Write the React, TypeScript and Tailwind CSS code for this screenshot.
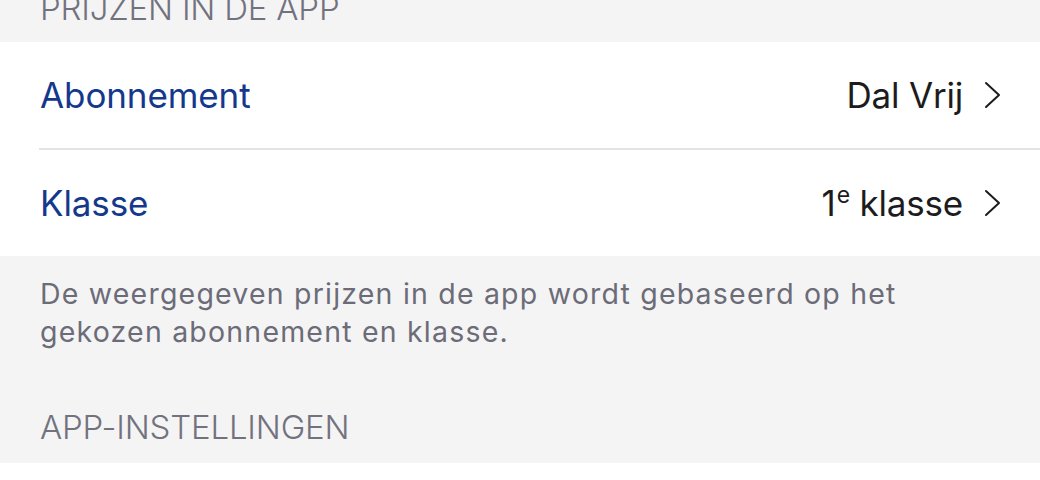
const font = { fontFamily: "Inter, 'Noto Sans', sans-serif" };

interface SettingRowProps {
  label: string;
  children: React.ReactNode;
}

const Chevron = () => (
  <svg width="17" height="28" viewBox="0 0 17 28" fill="none" className="shrink-0">
    <polyline
      points="2,2 15,14 2,26"
      stroke="#1c1c1e"
      strokeWidth="2"
      strokeLinecap="round"
      strokeLinejoin="round"
    />
  </svg>
);

const SettingRow = ({ label, children }: SettingRowProps) => {
  return (
    <div className="flex h-[106px] items-center justify-between pl-[40px] pr-[39px]">
      <span className="text-[35px] text-[#14388c] tracking-[-0.1px]">{label}</span>
      <div className="flex items-center gap-[21px]">
        <span className="text-[35px] text-[#1c1c1e] tracking-[-0.2px]">{children}</span>
        <Chevron />
      </div>
    </div>
  );
};

export default function App() {
  return (
    <div className="h-[480px] w-[1040px] overflow-hidden bg-[#f4f4f4]" style={font}>
      <div className="flex h-[42px] items-end px-[40px] pb-[17px]">
        <h2 className="text-[33px] font-light leading-none text-[#72727e] tracking-[-0.2px]">
          PRIJZEN IN DE APP
        </h2>
      </div>

      <div className="bg-white">
        <SettingRow label="Abonnement">Dal Vrij</SettingRow>
        <div className="ml-[39px] h-[2px] bg-[#e3e3e5]" />
        <SettingRow label="Klasse">
          1<sup className="relative -top-[13px] ml-[1px] text-[23px]">e</sup> klasse
        </SettingRow>
      </div>

      <p className="px-[40px] pt-[19px] text-[28.5px] leading-[38px] text-[#6c6c78] tracking-[1.2px]">
        De weergegeven prijzen in de app wordt gebaseerd op het
        <br />
        gekozen abonnement en klasse.
      </p>

      <div className="flex h-[112px] items-end px-[40px] pb-[19px]">
        <h2 className="text-[33px] font-light leading-none text-[#72727e] tracking-[-0.2px]">
          APP-INSTELLINGEN
        </h2>
      </div>

      <div className="h-[40px] bg-white" />
    </div>
  );
}
